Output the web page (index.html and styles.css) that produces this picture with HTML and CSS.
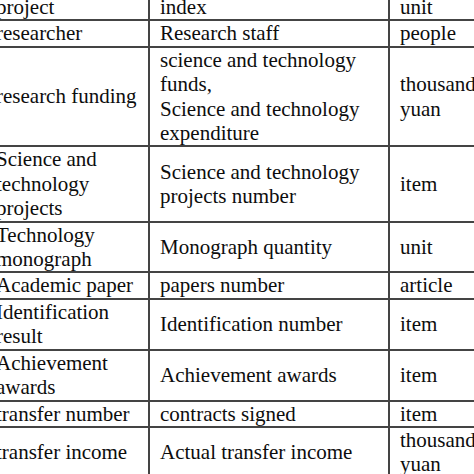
FILE: index.html
```html
<!DOCTYPE html>
<html>
<head>
<meta charset="utf-8">
<link rel="stylesheet" href="styles.css">
</head>
<body>
<table class="grid">
  <colgroup>
    <col class="c-project">
    <col class="c-index">
    <col class="c-unit">
  </colgroup>
  <tr class="head"><td>project</td><td>index</td><td>unit</td></tr>
  <tr><td>researcher</td><td>Research staff</td><td>people</td></tr>
  <tr><td>research funding</td><td>science and technology<br>funds,<br>Science and technology<br>expenditure</td><td>thousand yuan</td></tr>
  <tr><td>Science and technology projects</td><td>Science and technology projects number</td><td>item</td></tr>
  <tr><td>Technology monograph</td><td>Monograph quantity</td><td>unit</td></tr>
  <tr><td>Academic paper</td><td>papers number</td><td>article</td></tr>
  <tr><td>Identification result</td><td>Identification number</td><td>item</td></tr>
  <tr><td>Achievement awards</td><td>Achievement awards</td><td>item</td></tr>
  <tr><td>transfer number</td><td>contracts signed</td><td>item</td></tr>
  <tr><td>transfer income</td><td>Actual transfer income</td><td>thousand yuan</td></tr>
</table>
</body>
</html>
```
FILE: styles.css
```css
html, body {
  margin: 0;
  padding: 0;
  background: #ffffff;
  overflow: hidden;
}
body {
  width: 474px;
  height: 474px;
}
.grid {
  border-collapse: collapse;
  table-layout: fixed;
  width: 514px;
  margin-left: -16px;
  margin-top: -7px;
  font-family: "Liberation Serif", "Times New Roman", serif;
  font-size: 21px;
  line-height: 24.4px;
  color: #0d0d0d;
}
.c-project { width: 164px; }
.c-index { width: 240px; }
.c-unit { width: 110px; }
.grid td {
  border: 2px solid #444444;
  padding: 0 10px;
  vertical-align: middle;
  text-align: left;
}
```
